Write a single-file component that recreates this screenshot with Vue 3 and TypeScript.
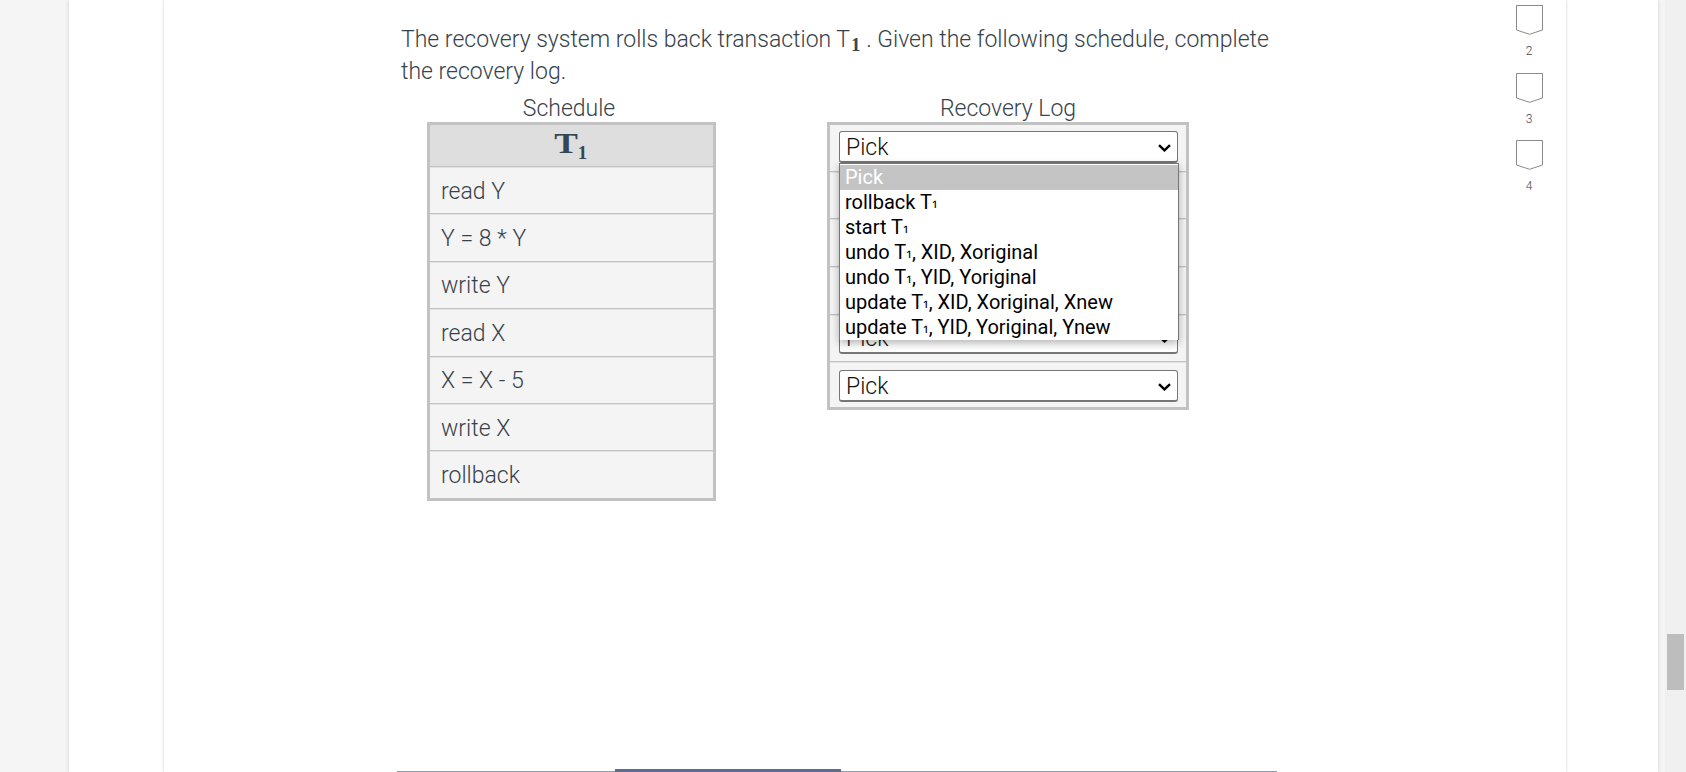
<script setup lang="ts">
const scheduleRows: string[] = ['read Y', 'Y = 8 * Y', 'write Y', 'read X', 'X = X - 5', 'write X', 'rollback']
const logRows: number[] = [1, 2, 3, 4, 5, 6]
const options: string[][] = [
  ['Pick'],
  ['rollback T', ''],
  ['start T', ''],
  ['undo T', ', XID, Xoriginal'],
  ['undo T', ', YID, Yoriginal'],
  ['update T', ', XID, Xoriginal, Xnew'],
  ['update T', ', YID, Yoriginal, Ynew'],
]
const flags: number[] = [2, 3, 4]
</script>

<template>
  <div class="page">
    <div class="outer">
      <div class="main">
        <div class="content">
          <p class="prompt">
            The recovery system rolls back transaction T<span class="sub">1</span> . Given the following schedule, complete
            the recovery log.
          </p>
          <div class="tables">
            <div class="block schedule">
              <div class="caption caption-left">Schedule</div>
              <table class="grid">
                <thead>
                  <tr>
                    <th><span class="th-main">T</span><span class="th-sub">1</span></th>
                  </tr>
                </thead>
                <tbody>
                  <tr v-for="row in scheduleRows" :key="row">
                    <td><span class="cell-text">{{ row }}</span></td>
                  </tr>
                </tbody>
              </table>
            </div>
            <div class="block log">
              <div class="caption">Recovery Log</div>
              <table class="grid log-grid">
                <tbody>
                  <tr v-for="r in logRows" :key="r">
                    <td>
                      <div class="pick-wrap">
                        <select class="pick">
                          <option>Pick</option>
                        </select>
                        <svg class="chevron" width="13" height="8" viewBox="0 0 13 8" fill="none">
                          <path d="M1 1.2L6.5 6.4L12 1.2" stroke="#000" stroke-width="2.4" />
                        </svg>
                      </div>
                    </td>
                  </tr>
                </tbody>
              </table>
              <ul class="menu">
                <li v-for="(o, i) in options" :key="i" :class="{ active: i === 0 }">
                  {{ o[0] }}<span v-if="o.length > 1" class="tiny">₁</span>{{ o[1] }}
                </li>
              </ul>
            </div>
          </div>
        </div>
        <aside class="flags">
          <div v-for="f in flags" :key="f" class="flag">
            <svg width="27" height="30" viewBox="0 0 27 30" fill="none">
              <path d="M0.5 0.5H26.5V25L13.5 29.3L0.5 25Z" stroke="#8a8a8a" stroke-width="1" />
            </svg>
            <span>{{ f }}</span>
          </div>
        </aside>
        <div class="progress">
          <div class="progress-fill"></div>
        </div>
      </div>
    </div>
    <div class="track"></div>
    <div class="scrollbar"></div>
  </div>
</template>

<style>
html,
body {
  margin: 0;
  padding: 0;
  overflow: hidden;
}
</style>

<style scoped>
.page {
  position: relative;
  width: 1686px;
  height: 772px;
  overflow: hidden;
  background: #f5f5f5;
  font-family: Roboto, "Liberation Sans", sans-serif;
  box-sizing: border-box;
  padding-left: 69px;
}
.outer {
  width: 1589px;
  height: 100%;
  background: #fff;
  box-shadow: 0 0 4px rgba(0, 0, 0, 0.16);
  padding-left: 95px;
  box-sizing: border-box;
}
.main {
  position: relative;
  display: flex;
  width: 1402px;
  height: 100%;
  background: #fff;
  box-shadow: 0 0 3px rgba(0, 0, 0, 0.2);
}
.content {
  width: 880px;
  margin-left: 237px;
  padding-top: 24px;
}
.prompt {
  margin: 0;
  font-size: 23px;
  font-weight: 300;
  line-height: 32px;
  color: #37424a;
}
.sub {
  font-family: "Liberation Serif", serif;
  font-weight: 700;
  font-size: 19px;
  line-height: 0;
  vertical-align: -4px;
  margin-left: 1px;
  color: #37474f;
}
.tables {
  display: flex;
  gap: 111px;
  padding-left: 26px;
  margin-top: 5px;
}
.block {
  position: relative;
}
.schedule {
  width: 289px;
}
.log {
  width: 362px;
}
.caption {
  font-size: 23px;
  font-weight: 300;
  line-height: 32px;
  text-align: center;
  color: #37424a;
  height: 29px;
}
.caption-left {
  padding-right: 5px;
}
.grid {
  width: 100%;
  box-sizing: border-box;
  border-collapse: separate;
  border-spacing: 0;
  border: 3px solid #c2c2c2;
}
.grid th {
  height: 41px;
  padding: 0;
  background: #dedede;
  font-family: "Liberation Serif", serif;
  font-weight: 700;
  color: #37474f;
  text-align: center;
  line-height: 0;
}
.th-main {
  display: inline-block;
  font-size: 30px;
  transform: scaleX(1.18);
  margin-right: 2px;
}
.th-sub {
  font-size: 19px;
  position: relative;
  top: 6px;
}
.grid td {
  box-sizing: border-box;
  height: 47.4px;
  padding: 0 0 0 11px;
  background: #f4f4f4;
  border-top: 1px solid #c2c2c2;
  box-shadow: inset 0 1px 0 #e2e2e2;
  font-size: 23px;
  font-weight: 300;
  color: #37424a;
}
.cell-text {
  position: relative;
  top: 1px;
}
.log-grid td {
  height: 47.7px;
  padding: 7.3px 7px 0 10px;
  vertical-align: top;
}
.log-grid tr:first-child td {
  height: 45.7px;
  padding-top: 5.5px;
  border-top: none;
  box-shadow: none;
}
.log-grid tr:last-child td {
  height: 46px;
}
.pick-wrap {
  position: relative;
  width: 339px;
  margin-left: -1px;
}
.pick {
  display: block;
  width: 100%;
  height: 32px;
  padding: 2px 0 0 6px;
  appearance: none;
  background: #fff;
  border: 1px solid #767676;
  border-bottom-width: 2px;
  border-radius: 3px;
  font-family: Roboto, sans-serif;
  font-size: 23px;
  font-weight: 300;
  color: #111;
}
.chevron {
  position: absolute;
  top: 13px;
  right: 7px;
  pointer-events: none;
}
.menu {
  position: absolute;
  top: 70px;
  left: 12px;
  width: 340px;
  margin: 0;
  padding: 1px 0 0;
  box-sizing: border-box;
  list-style: none;
  background: #fff;
  border: 1px solid #767676;
  border-bottom: none;
  box-shadow: 0 3px 8px rgba(0, 0, 0, 0.3);
  font-size: 20px;
  color: #000;
}
.menu li {
  height: 25px;
  line-height: 25px;
  padding-left: 5px;
  white-space: nowrap;
}
.tiny {
  font-family: "Noto Sans", sans-serif;
  font-size: 16px;
  line-height: 0;
  position: relative;
  top: -3px;
}
.menu li.active {
  background: #c4c4c4;
  color: #fff;
}
.flags {
  position: absolute;
  top: 5px;
  left: 1350px;
  width: 30px;
  display: flex;
  flex-direction: column;
  align-items: center;
}
.flag {
  height: 67.5px;
  display: flex;
  flex-direction: column;
  align-items: center;
}
.flag svg {
  display: block;
}
.flag span {
  margin-top: 9px;
  font-size: 12px;
  line-height: 14px;
  font-weight: 300;
  color: #444;
}
.progress {
  position: absolute;
  left: 233px;
  bottom: 0;
  width: 880px;
  height: 1px;
  background: #8aa0b8;
}
.progress-fill {
  position: absolute;
  left: 218px;
  bottom: 0;
  width: 226px;
  height: 3px;
  background: #5a6e91;
}
.track {
  position: absolute;
  left: 1665px;
  top: 0;
  bottom: 0;
  right: 0;
  background: #f0f0f0;
}
.scrollbar {
  position: absolute;
  left: 1667px;
  top: 634px;
  width: 17px;
  height: 56px;
  background: #bdbdbd;
}
</style>
